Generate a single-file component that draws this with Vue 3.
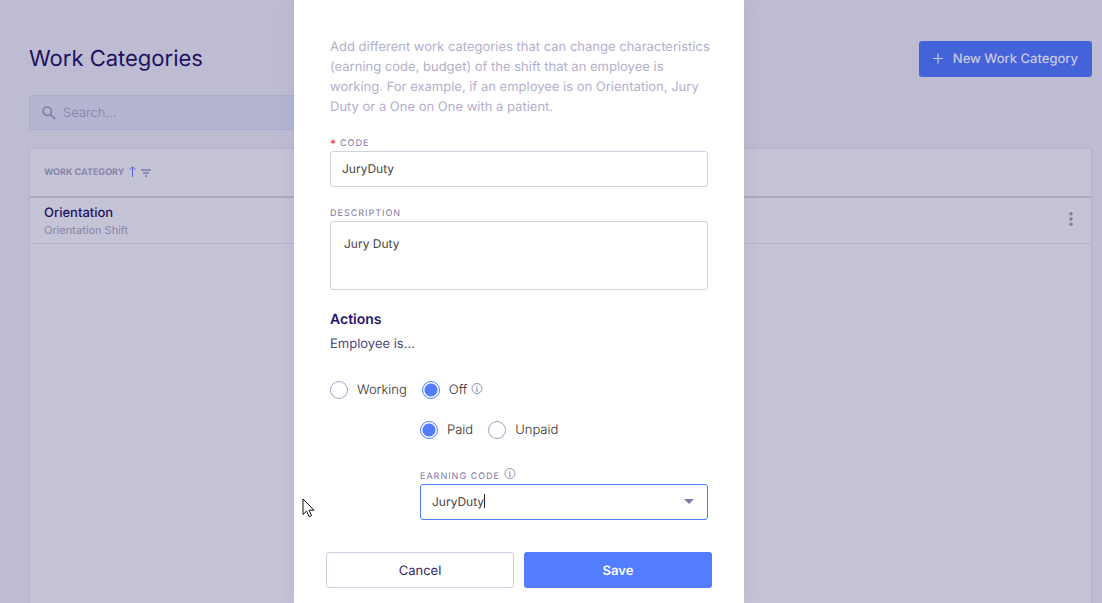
<template>
  <div class="page">
    <main class="content">
      <header class="page-header">
        <h1>Work Categories</h1>
        <button type="button" class="btn-new">
          <svg width="10" height="11" viewBox="0 0 10 11" aria-hidden="true">
            <path d="M5 0.5v10M0 5.5h10" stroke="currentColor" stroke-width="1.2" />
          </svg>
          New Work Category
        </button>
      </header>

      <div class="search">
        <svg width="14" height="14" viewBox="0 0 14 14" aria-hidden="true">
          <circle cx="5.2" cy="5.2" r="4.2" fill="none" stroke="currentColor" stroke-width="1.7" />
          <path d="M8.4 8.4 13.2 13.2" stroke="currentColor" stroke-width="1.9" />
        </svg>
        <input v-model="search" type="text" placeholder="Search..." aria-label="Search" />
      </div>

      <div class="table-wrap">
        <table>
          <thead>
            <tr>
              <th>
                <div class="th-inner">
                  <span>Work category</span>
                  <svg class="sort" width="7" height="14" viewBox="0 0 7 14" aria-hidden="true">
                    <path d="M3.5 11V1M0.5 3.8 3.5 0.8 6.5 3.8" fill="none" stroke="currentColor" />
                  </svg>
                  <svg class="filter" width="10" height="8" viewBox="0 0 10 8" aria-hidden="true">
                    <path d="M0 1h10M2 4h6M4 7h2" stroke="currentColor" stroke-width="1.2" />
                  </svg>
                </div>
              </th>
              <th></th>
            </tr>
          </thead>
          <tbody>
            <tr v-for="row in rows" :key="row.name">
              <td>
                <div class="row-name">{{ row.name }}</div>
                <div class="row-desc">{{ row.description }}</div>
              </td>
              <td class="row-actions">
                <button type="button" class="btn-more" aria-label="More">
                  <svg width="4" height="14" viewBox="0 0 4 14" aria-hidden="true">
                    <circle cx="2" cy="1.8" r="1.7" />
                    <circle cx="2" cy="7" r="1.7" />
                    <circle cx="2" cy="12.2" r="1.7" />
                  </svg>
                </button>
              </td>
            </tr>
          </tbody>
        </table>
      </div>
    </main>

    <!-- MODAL -->
    <div class="overlay">
      <form class="modal" role="dialog" aria-label="Work category" @submit.prevent>
        <div class="modal-body">
          <p class="intro">
            Add different work categories that can change characteristics (earning code, budget)
            of the shift that an employee is working. For example, if an employee is on
            Orientation, Jury Duty or a One on One with a patient.
          </p>

          <div class="field">
            <label for="code"><span class="required">*</span> Code</label>
            <input id="code" v-model="form.code" type="text" class="control" />
          </div>

          <div class="field">
            <label for="description">Description</label>
            <textarea id="description" v-model="form.description" class="control"></textarea>
          </div>

          <h2>Actions</h2>
          <p class="subtitle">Employee is...</p>

          <div class="radios">
            <label class="radio">
              <input v-model="form.status" type="radio" name="status" value="working" />
              Working
            </label>
            <label class="radio">
              <input v-model="form.status" type="radio" name="status" value="off" />
              Off
            </label>
            <svg class="info" width="12" height="14" viewBox="0 0 12 14" aria-hidden="true">
              <circle cx="6" cy="5.5" r="5" />
              <path d="M6 2.6v1.1M5 4.9h1V8M4.8 8.1h2.4" />
            </svg>
          </div>

          <div class="nested">
            <div class="radios">
              <label class="radio">
                <input v-model="form.pay" type="radio" name="pay" value="paid" />
                Paid
              </label>
              <label class="radio">
                <input v-model="form.pay" type="radio" name="pay" value="unpaid" />
                Unpaid
              </label>
            </div>

            <div class="field earning">
              <label for="earning">
                Earning code
                <svg class="info" width="12" height="16" viewBox="0 0 12 16" aria-hidden="true">
                  <circle cx="6" cy="5.5" r="5" />
                  <path d="M6 2.6v1.1M5 4.9h1V8M4.8 8.1h2.4" />
                </svg>
              </label>
              <div class="control combo">
                <input id="earning" v-model="form.earningCode" type="text" role="combobox" aria-expanded="false" />
                <span class="caret"></span>
                <svg class="arrow" width="10" height="5" viewBox="0 0 10 5" aria-hidden="true">
                  <path d="M0 0h10L5 5z" />
                </svg>
              </div>
            </div>
          </div>
        </div>

        <footer class="modal-footer">
          <button type="button" class="btn-cancel">Cancel</button>
          <button type="submit" class="btn-save">Save</button>
        </footer>
      </form>

      <svg class="pointer" width="13" height="20" viewBox="0 0 13 20" aria-hidden="true">
        <path d="M1 1v15.5l3.6-3.4 2.6 5.7 2.4-1.1L7 12.2h5z" fill="#fff" stroke="#111" />
      </svg>
    </div>
  </div>
</template>

<script setup>
import { reactive, ref } from 'vue'

const search = ref('')

const rows = [
  { name: 'Orientation', description: 'Orientation Shift' }
]

const form = reactive({
  code: 'JuryDuty',
  description: 'Jury Duty',
  status: 'off',
  pay: 'paid',
  earningCode: 'JuryDuty'
})
</script>

<style>
body {
  margin: 0;
  background: #bebcd3;
}
</style>

<style scoped>
* {
  box-sizing: border-box;
}

.page {
  position: relative;
  min-height: 100vh;
  display: flex;
  font-family: Inter, "Liberation Sans", sans-serif;
  font-size: 13px;
  text-rendering: geometricPrecision;
  background: #bebcd3;
}

button,
input,
textarea {
  font: inherit;
  text-rendering: inherit;
}

/* PAGE */
.content {
  flex: 1;
  display: flex;
  flex-direction: column;
  padding: 41px 10px 0 29px;
}

.page-header {
  display: flex;
  justify-content: space-between;
  height: 36px;
}

h1 {
  margin: 0;
  font-size: 22px;
  font-weight: 400;
  line-height: 36px;
  color: #1d1160;
}

.btn-new {
  display: flex;
  align-items: center;
  gap: 10px;
  height: 36px;
  padding: 0 14px 1px;
  border: 0;
  border-radius: 3px;
  background: #4463d8;
  color: #c9cae6;
  font-weight: 500;
}

.search {
  display: flex;
  align-items: center;
  gap: 7px;
  width: 36%;
  height: 35px;
  margin-top: 18px;
  padding: 0 12px;
  border: 1px solid #acafd0;
  border-radius: 3px;
  background: #b3b5d1;
  color: #8380a9;
}

.search input {
  flex: 1;
  padding: 0;
  border: 0;
  background: none;
  font-weight: 300;
  outline: none;
}

.search input::placeholder {
  color: #8683ab;
}

/* TABLE */
.table-wrap {
  flex: 1;
  margin-top: 18px;
  border: 1px solid #b5b3d0;
  border-bottom: 0;
  background: #c5c3d6;
}

table {
  width: 100%;
  border-collapse: collapse;
}

th {
  height: 48px;
  padding: 0 14px;
  border-bottom: 2px solid #aba9bf;
  text-align: left;
}

.th-inner {
  display: flex;
  align-items: center;
  gap: 5px;
  font-size: 9px;
  font-weight: 700;
  text-transform: uppercase;
  color: #8784ab;
}

.sort {
  color: #5b62dc;
}

.filter {
  color: #59558c;
}

td {
  height: 46px;
  padding: 1px 14px 0;
  border-bottom: 1px solid #b5b3d0;
}

.row-name {
  line-height: 18px;
  font-weight: 500;
  color: #1d1160;
}

.row-desc {
  font-size: 11px;
  line-height: 16px;
  color: #8784a8;
}

.row-actions {
  text-align: right;
}

.btn-more {
  padding: 0 4px;
  border: 0;
  background: none;
  fill: #7d79a5;
}

.btn-more svg {
  display: block;
}

/* MODAL */
.overlay {
  position: absolute;
  inset: 0;
  display: flex;
  justify-content: center;
  padding-right: 64px;
}

.modal {
  width: 450px;
  padding: 37px 32px 15px;
  background: #fff;
  box-shadow: 0 0 20px rgba(60, 50, 120, 0.08);
}

.modal-body {
  padding: 0 4px;
}

.intro {
  margin: 0 -6px 18px 0;
  line-height: 20px;
  color: #b3b0cc;
}

.field {
  display: flex;
  flex-direction: column;
  margin-bottom: 18px;
}

.field label {
  display: flex;
  align-items: center;
  gap: 4px;
  height: 16px;
  font-size: 9px;
  letter-spacing: 1px;
  text-transform: uppercase;
  color: #7d79a3;
}

.required {
  font-size: 12px;
  letter-spacing: 0;
  color: #f0185c;
}

.control {
  height: 36px;
  padding: 0 11px 2px;
  border: 1px solid #cdd2de;
  border-radius: 3px;
  background: #fff;
  font-size: 12px;
  color: #444;
  outline: none;
}

textarea.control {
  height: 69px;
  padding: 14px 13px;
  line-height: 16px;
  resize: none;
}

h2 {
  margin: 20px 0 4px;
  font-size: 14px;
  font-weight: 600;
  line-height: 20px;
  color: #25156b;
}

.subtitle {
  margin: 0 0 26px;
  line-height: 20px;
  color: #48487a;
}

.radios {
  display: flex;
  align-items: center;
  height: 20px;
}

.radio {
  display: flex;
  align-items: center;
  gap: 9px;
  margin-right: 15px;
  font-weight: 300;
  color: #333;
}

.radio:has(+ .info) {
  margin-right: 4px;
}

.radio input {
  appearance: none;
  width: 18px;
  height: 18px;
  margin: 0;
  border: 1px solid #a5a2c4;
  border-radius: 50%;
}

.radio input:checked {
  border-color: #527dff;
  background: radial-gradient(circle, #527dff 6px, #fff 7px);
}

.info {
  fill: none;
  stroke: #8a86ae;
  stroke-width: 0.9;
}

.nested {
  margin: 20px 0 0 90px;
}

.earning {
  margin: 28px 0 32px;
}

.combo {
  display: flex;
  align-items: center;
  border-color: #527dff;
}

.combo input {
  field-sizing: content;
  padding: 0;
  border: 0;
  color: inherit;
  outline: none;
}

.caret {
  width: 1px;
  height: 14px;
  background: #222;
}

.arrow {
  margin: 0 2px 0 auto;
  fill: #7d79a3;
}

.modal-footer {
  display: grid;
  grid-template-columns: 1fr 1fr;
  gap: 10px;
}

.modal-footer button {
  height: 36px;
  padding: 1px 0 0;
  border-radius: 3px;
}

.btn-cancel {
  border: 1px solid #cfcde0;
  background: #fff;
  color: #2f2569;
}

.btn-save {
  border: 0;
  background: #527dff;
  color: #fff;
  font-weight: 600;
}

/* mouse pointer lying over the dialog */
.pointer {
  position: absolute;
  top: 498px;
  left: calc(50% - 249px);
}
</style>
